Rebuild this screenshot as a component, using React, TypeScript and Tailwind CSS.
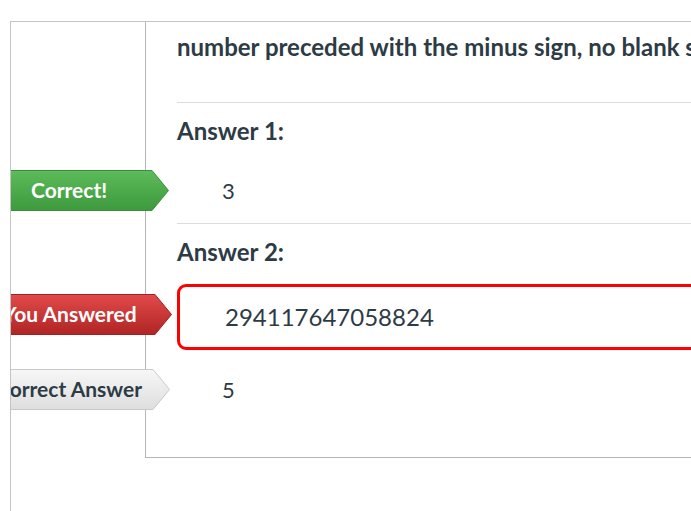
import React from 'react';

type Tone = 'green' | 'red' | 'gray';

const TONES: Record<Tone, { top: string; bottom: string; stroke: string; text: string }> = {
  green: { top: '#5cbb5a', bottom: '#3e9a3d', stroke: '#3a8f39', text: 'text-white' },
  red: { top: '#e24a4a', bottom: '#b02525', stroke: '#a32121', text: 'text-white' },
  gray: { top: '#f7f7f7', bottom: '#dedede', stroke: '#c8c8c8', text: 'text-[#2d3b45]' },
};

// arrow tag that hangs out to the left of an answer row
function ArrowLabel({ tone, label, width, textLeft }: { tone: Tone; label: string; width: number; textLeft: number }) {
  const t = TONES[tone];
  const id = 'grad-' + tone;
  return (
    <div className="absolute top-0 h-[41px]" style={{ left: -177, width }}>
      <svg className="absolute inset-0" width={width} height={41} viewBox={`0 0 ${width} 41`}>
        <defs>
          <linearGradient id={id} x1="0" y1="0" x2="0" y2="1">
            <stop offset="0" stopColor={t.top} />
            <stop offset="1" stopColor={t.bottom} />
          </linearGradient>
        </defs>
        <polygon
          points={`0.5,0.5 ${width - 17},0.5 ${width - 0.5},20.5 ${width - 17},40.5 0.5,40.5`}
          fill={`url(#${id})`}
          stroke={t.stroke}
          strokeWidth={1}
        />
      </svg>
      <span
        className={`absolute top-0 h-[40px] flex items-center text-[21px] font-bold whitespace-nowrap ${t.text}`}
        style={{ left: textLeft }}
      >
        {label}
      </span>
    </div>
  );
}

export default function App() {
  return (
    <div className="w-[691px] h-[511px] overflow-hidden bg-white font-['Lato','Liberation_Sans',sans-serif] text-[#2d3b45]">
      <div className="pt-[21px] pl-[10px] h-full">
        <div className="h-full border-l border-t border-[#c4c4c4] overflow-hidden flex">
          <div className="w-[134px] shrink-0" />
          <div className="w-[720px] shrink-0 self-start border-l border-b border-[#b5b5b5] -mt-[32px] pl-[31px] pb-[47px]">
            <p className="text-[24px] font-bold leading-[38px] whitespace-nowrap">
              Type the answer as a single whole number. Write a
              <br />
              number preceded with the minus sign, no blank spaces.
            </p>

            <div className="mt-[36px] border-t border-[#dcdcdc]">
              <h3 className="mt-[14px] text-[24px] font-bold leading-[28px]">Answer 1:</h3>
              <div className="relative mt-[25px] h-[41px] flex items-center pl-[45px] text-[22px]">
                <ArrowLabel tone="green" label="Correct!" width={169} textLeft={31} />
                3
              </div>
            </div>

            <div className="mt-[12px] border-t border-[#dcdcdc]">
              <h3 className="mt-[14px] text-[24px] font-bold leading-[28px]">Answer 2:</h3>
              <div className="relative mt-[18px] h-[66px] border-[3px] border-[#ff0000] rounded-[9px] flex items-center pl-[45px] text-[24px]">
                <div className="absolute top-[7px] left-[-3px]">
                  <ArrowLabel tone="red" label="You Answered" width={172} textLeft={3} />
                </div>
                294117647058824
              </div>
              <div className="relative mt-[19px] h-[41px] flex items-center pl-[45px] text-[22px]">
                <ArrowLabel tone="gray" label="Correct Answer" width={170} textLeft={-4} />
                5
              </div>
            </div>
          </div>
        </div>
      </div>
    </div>
  );
}
